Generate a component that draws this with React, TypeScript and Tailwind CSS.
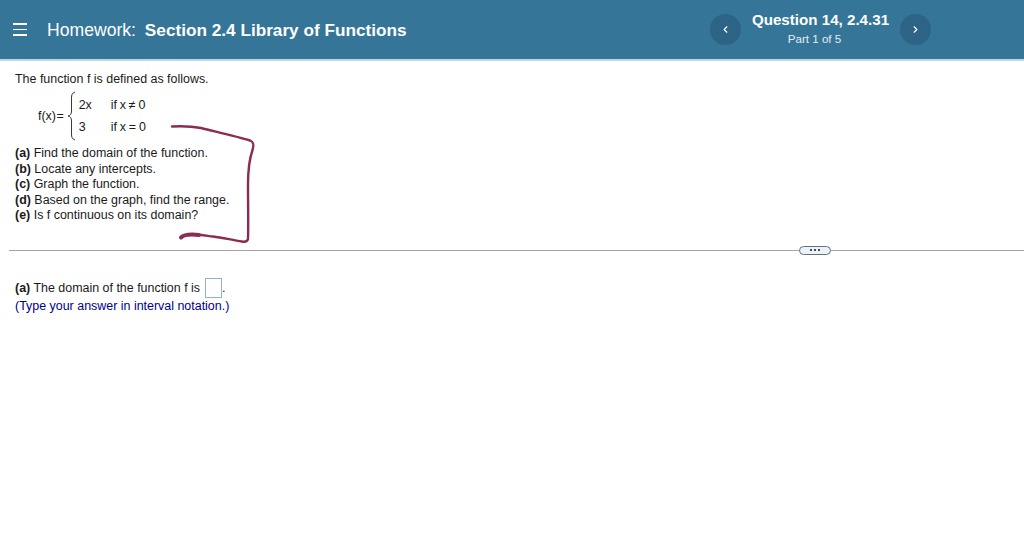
import { ChevronLeft, ChevronRight } from "lucide-react";

const parts = [
  { label: "(a)", text: "Find the domain of the function." },
  { label: "(b)", text: "Locate any intercepts." },
  { label: "(c)", text: "Graph the function." },
  { label: "(d)", text: "Based on the graph, find the range." },
  { label: "(e)", text: "Is f continuous on its domain?" },
];

const NavButton = ({ children }: { children: React.ReactNode }) => (
  <button className="flex h-[31px] w-[31px] items-center justify-center rounded-full bg-[#2d6485] text-white">
    {children}
  </button>
);

export default function App() {
  return (
    <div className="relative h-[535px] w-[1024px] overflow-hidden bg-white font-['Liberation_Sans',Arial,sans-serif] text-[12.45px] text-[#1a1a1a]">
      {/* Header */}
      <header className="flex h-[61px] items-center border-b-2 border-[#c3d5e2] bg-[#357598] text-white">
        <div className="ml-[13px] flex w-[14px] flex-col gap-[4px]">
          <span className="h-[1.5px] bg-white" />
          <span className="h-[1.5px] bg-white" />
          <span className="h-[1.5px] bg-white" />
        </div>
        <h1 className="ml-[20px] mt-[1px] text-[17.6px] whitespace-nowrap">
          Homework: <span className="ml-[4px] text-[17.2px] font-bold">Section 2.4 Library of Functions</span>
        </h1>
        <div className="ml-auto mr-[93px] flex items-center">
          <NavButton>
            <ChevronLeft size={11} strokeWidth={2.5} />
          </NavButton>
          <div className="w-[159px] pb-[4px] text-center">
            <div className="text-[15.15px] leading-[20px] font-bold whitespace-nowrap">Question 14, 2.4.31</div>
            <div className="mt-[1px] pr-[12px] text-[11.6px] leading-[15px] text-[#e4edf3]">Part 1 of 5</div>
          </div>
          <NavButton>
            <ChevronRight size={11} strokeWidth={2.5} />
          </NavButton>
        </div>
      </header>

      {/* Question */}
      <main className="pl-[15px] pt-[10px]">
        <p className="leading-[16px]">The function f is defined as follows.</p>

        <div className="mt-[6px] ml-[23px] flex h-[46px] items-center">
          <span className="[word-spacing:-3px]">f(x) =</span>
          <svg width="13" height="50" viewBox="0 0 13 50" className="ml-[1px] shrink-0 text-[#222]">
            <path
              d="M10 1 C7 2 6.5 4 6.5 7 L6.5 20 C6.5 23 5.5 24.5 3 25 C5.5 25.5 6.5 27 6.5 30 L6.5 43 C6.5 46 7 48 10 49"
              fill="none"
              stroke="currentColor"
              strokeWidth="0.9"
            />
          </svg>
          <div className="ml-[1px] flex flex-col gap-[6px] leading-[16px]">
            <div className="flex">
              <span className="w-[32px]">2x</span>
              <span className="[word-spacing:-0.6px]">if x ≠ 0</span>
            </div>
            <div className="flex">
              <span className="w-[32px]">3</span>
              <span className="[word-spacing:-0.6px]">if x = 0</span>
            </div>
          </div>
        </div>

        <ul className="mt-[7px] leading-[15.6px]">
          {parts.map((part) => (
            <li key={part.label}>
              <b>{part.label}</b> {part.text}
            </li>
          ))}
        </ul>
      </main>

      {/* Divider */}
      <div className="relative mt-[26px] ml-[9px] h-px bg-[#aaa3a8]">
        <div className="absolute left-[790px] top-[-4px] flex h-[9px] w-[32px] items-center justify-center gap-[2px] rounded-full border border-[#5f7286] bg-[#eef1f5]">
          <span className="h-[2px] w-[2px] bg-[#3f4f60]" />
          <span className="h-[2px] w-[2px] bg-[#3f4f60]" />
          <span className="h-[2px] w-[2px] bg-[#3f4f60]" />
        </div>
      </div>

      {/* Answer */}
      <section className="pl-[15px] pt-[27px]">
        <p className="flex h-[20px] items-center">
          <span>
            <b>(a)</b> The domain of the function f is
          </span>
          <span className="ml-[5px] h-[20px] w-[17px] border border-[#8fb0e0] bg-white" />
          <span>.</span>
        </p>
        <p className="leading-[16px] text-[#00008b]">(Type your answer in interval notation.)</p>
      </section>

      {/* Pen annotation */}
      <svg className="pointer-events-none absolute left-0 top-0" width="1024" height="535" fill="none">
        <path
          d="M172 126.5 C182 126 193 126.5 201 128 C217 132 236 136 250 140.5 C254 142 254 145 252.5 150 C249 160 248 170 248 185 C248 205 248.5 225 248 239 C247.5 241.5 245 242 242 241.5 C232 240 222 237.5 213 236.5 C205 235.5 197 234 190 234.5"
          stroke="#8c2c52"
          strokeWidth="2.4"
          strokeLinecap="round"
          strokeLinejoin="round"
        />
        <path d="M181 237.5 C184 234.5 190 234 199 235" stroke="#8c2c52" strokeWidth="4" strokeLinecap="round" />
      </svg>
    </div>
  );
}
